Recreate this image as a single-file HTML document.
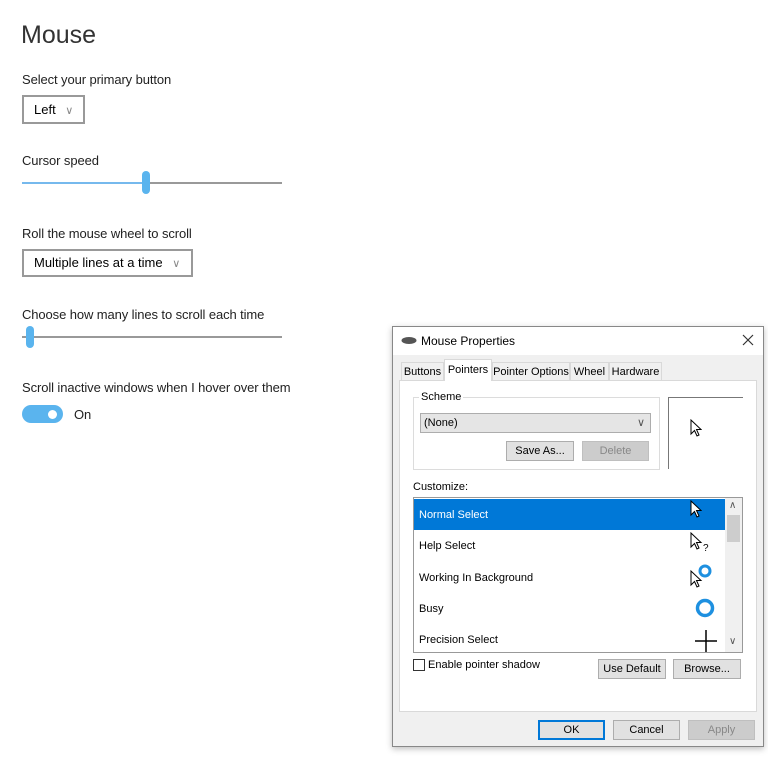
<!DOCTYPE html>
<html><head><style>
body{margin:0;width:768px;height:759px;background:#fff;font-family:"Liberation Sans",sans-serif;position:relative;overflow:hidden;color:#000}
.a{position:absolute}
.t{font-size:13px;color:#222;letter-spacing:-0.1px}
.d{font-size:11px;color:#000}
.btn{position:absolute;background:#e1e1e1;border:1px solid #adadad;box-sizing:border-box;font-size:11px;text-align:center;line-height:18px}
.row{position:absolute;left:414px;width:311px;height:31px;font-size:11px;line-height:31px;padding-left:5px;box-sizing:border-box}
.chev{color:#888;font-size:11px}
</style></head><body>
<div class="a" style="left:21px;top:21px;font-size:25px;color:#333">Mouse</div>
<div class="a t" style="left:22px;top:72px">Select your primary button</div>
<div class="a" style="left:22px;top:95px;width:63px;height:29px;border:2px solid #999;box-sizing:border-box;font-size:13px;line-height:25px;padding-left:10px">Left <span class="chev" style="margin-left:6px">&#x2228;</span></div>
<div class="a t" style="left:22px;top:153px">Cursor speed</div>
<div class="a" style="left:22px;top:182px;width:124px;height:2px;background:#76b9ed"></div>
<div class="a" style="left:146px;top:182px;width:136px;height:2px;background:#999"></div>
<div class="a" style="left:142px;top:171px;width:8px;height:23px;border-radius:4px;background:#5ab4ee"></div>
<div class="a t" style="left:22px;top:226px">Roll the mouse wheel to scroll</div>
<div class="a" style="left:22px;top:249px;width:171px;height:28px;border:2px solid #999;box-sizing:border-box;font-size:13px;line-height:24px;padding-left:10px">Multiple lines at a time <span class="chev" style="margin-left:6px">&#x2228;</span></div>
<div class="a t" style="left:22px;top:307px">Choose how many lines to scroll each time</div>
<div class="a" style="left:22px;top:336px;width:260px;height:2px;background:#999"></div>
<div class="a" style="left:26px;top:326px;width:8px;height:22px;border-radius:4px;background:#5ab4ee"></div>
<div class="a t" style="left:22px;top:380px">Scroll inactive windows when I hover over them</div>
<div class="a" style="left:22px;top:405px;width:41px;height:18px;border-radius:9px;background:#5ab4ee"></div>
<div class="a" style="left:48px;top:410px;width:9px;height:9px;border-radius:5px;background:#fff"></div>
<div class="a t" style="left:74px;top:407px">On</div>

<div class="a" style="left:392px;top:326px;width:372px;height:421px;border:1px solid #888;box-sizing:border-box;background:#f0f0f0;box-shadow:0 2px 6px rgba(0,0,0,.25)"></div>
<div class="a" style="left:393px;top:327px;width:370px;height:28px;background:#fff"></div>
<svg class="a" style="left:401px;top:336px" width="16" height="9"><ellipse cx="8" cy="4.5" rx="7.5" ry="3.5" fill="#555"/></svg>
<div class="a" style="left:421px;top:334px;font-size:12px">Mouse Properties</div>
<svg class="a" style="left:742px;top:334px" width="12" height="12"><path d="M1 1L11 11M11 1L1 11" stroke="#333" stroke-width="1.2"/></svg>
<div class="a" style="left:399px;top:380px;width:358px;height:332px;background:#fff;border:1px solid #d9d9d9;box-sizing:border-box"></div>
<div class="a d" style="left:401px;top:362px;width:43px;height:18px;border:1px solid #d9d9d9;border-bottom:none;box-sizing:border-box;line-height:18px;text-align:center;background:#f0f0f0">Buttons</div>
<div class="a d" style="left:444px;top:359px;width:48px;height:22px;border:1px solid #d9d9d9;border-bottom:none;box-sizing:border-box;background:#fff;line-height:20px;text-align:center">Pointers</div>
<div class="a d" style="left:492px;top:362px;width:78px;height:18px;border:1px solid #d9d9d9;border-bottom:none;box-sizing:border-box;line-height:18px;text-align:center;background:#f0f0f0">Pointer Options</div>
<div class="a d" style="left:570px;top:362px;width:39px;height:18px;border:1px solid #d9d9d9;border-bottom:none;box-sizing:border-box;line-height:18px;text-align:center;background:#f0f0f0">Wheel</div>
<div class="a d" style="left:609px;top:362px;width:53px;height:18px;border:1px solid #d9d9d9;border-bottom:none;box-sizing:border-box;line-height:18px;text-align:center;background:#f0f0f0">Hardware</div>
<div class="a" style="left:413px;top:397px;width:247px;height:73px;border:1px solid #dcdcdc;box-sizing:border-box"></div>
<div class="a d" style="left:419px;top:391px;background:#fff;padding:0 2px">Scheme</div>
<div class="a d" style="left:420px;top:413px;width:231px;height:20px;border:1px solid #adadad;box-sizing:border-box;background:#e5e5e5;line-height:18px;padding-left:3px">(None)<span style="position:absolute;right:5px;color:#555">&#x2228;</span></div>
<div class="btn" style="left:506px;top:441px;width:68px;height:20px">Save As...</div>
<div class="btn" style="left:582px;top:441px;width:67px;height:20px;background:#ccc;border-color:#bfbfbf;color:#888">Delete</div>
<div class="a" style="left:668px;top:397px;width:75px;height:72px;border-top:1px solid #777;border-left:1px solid #777;box-sizing:border-box"></div>
<svg class="a" style="left:690px;top:419px" width="12" height="18"><path d="M1 1V15L4.5 11.5L7 17L9 16L6.5 10.5H11Z" fill="#fff" stroke="#000"/></svg>
<div class="a d" style="left:413px;top:481px">Customize:</div>
<div class="a" style="left:413px;top:497px;width:330px;height:156px;border:1px solid #999;box-sizing:border-box;background:#fff"></div>
<div class="row" style="top:499px;background:#0078d7;color:#fff;line-height:32px">Normal Select</div>
<div class="row" style="top:531px">Help Select</div>
<div class="row" style="top:563px">Working In Background</div>
<div class="row" style="top:594px">Busy</div>
<div class="row" style="top:626px;height:25px;line-height:29px">Precision Select</div>
<div class="a" style="left:725px;top:498px;width:17px;height:154px;background:#f0f0f0"></div>
<div class="a" style="left:727px;top:515px;width:13px;height:27px;background:#cdcdcd"></div>
<div class="a" style="left:729px;top:500px;font-size:10px;color:#555">&#x2227;</div>
<div class="a" style="left:729px;top:636px;font-size:10px;color:#555">&#x2228;</div>
<svg class="a" style="left:690px;top:500px" width="12" height="18"><path d="M1 1V15L4.5 11.5L7 17L9 16L6.5 10.5H11Z" fill="#fff" stroke="#000"/></svg>
<svg class="a" style="left:690px;top:532px" width="22" height="20"><path d="M1 1V15L4.5 11.5L7 17L9 16L6.5 10.5H11Z" fill="#fff" stroke="#000"/><text x="13" y="19" font-size="10" font-family="Liberation Sans">?</text></svg>
<svg class="a" style="left:690px;top:562px" width="24" height="26"><path d="M1 9V23L4.5 19.5L7 25L9 24L6.5 18.5H11Z" fill="#fff" stroke="#000"/><circle cx="15" cy="9" r="5" fill="none" stroke="#1e90e0" stroke-width="3"/></svg>
<svg class="a" style="left:695px;top:598px" width="20" height="20"><circle cx="10" cy="10" r="7.5" fill="none" stroke="#1e90e0" stroke-width="3.5"/></svg>
<svg class="a" style="left:694px;top:630px" width="24" height="22"><path d="M12 0V22M1 11H23" stroke="#000" stroke-width="1.5"/></svg>
<div class="a" style="left:413px;top:659px;width:12px;height:12px;border:1px solid #333;box-sizing:border-box;background:#fff"></div>
<div class="a d" style="left:428px;top:659px">Enable pointer shadow</div>
<div class="btn" style="left:598px;top:659px;width:68px;height:20px">Use Default</div>
<div class="btn" style="left:673px;top:659px;width:68px;height:20px">Browse...</div>
<div class="btn" style="left:538px;top:720px;width:67px;height:20px;border:2px solid #0078d7;line-height:16px">OK</div>
<div class="btn" style="left:613px;top:720px;width:67px;height:20px">Cancel</div>
<div class="btn" style="left:688px;top:720px;width:67px;height:20px;background:#ccc;border-color:#bfbfbf;color:#888">Apply</div>
</body></html>
